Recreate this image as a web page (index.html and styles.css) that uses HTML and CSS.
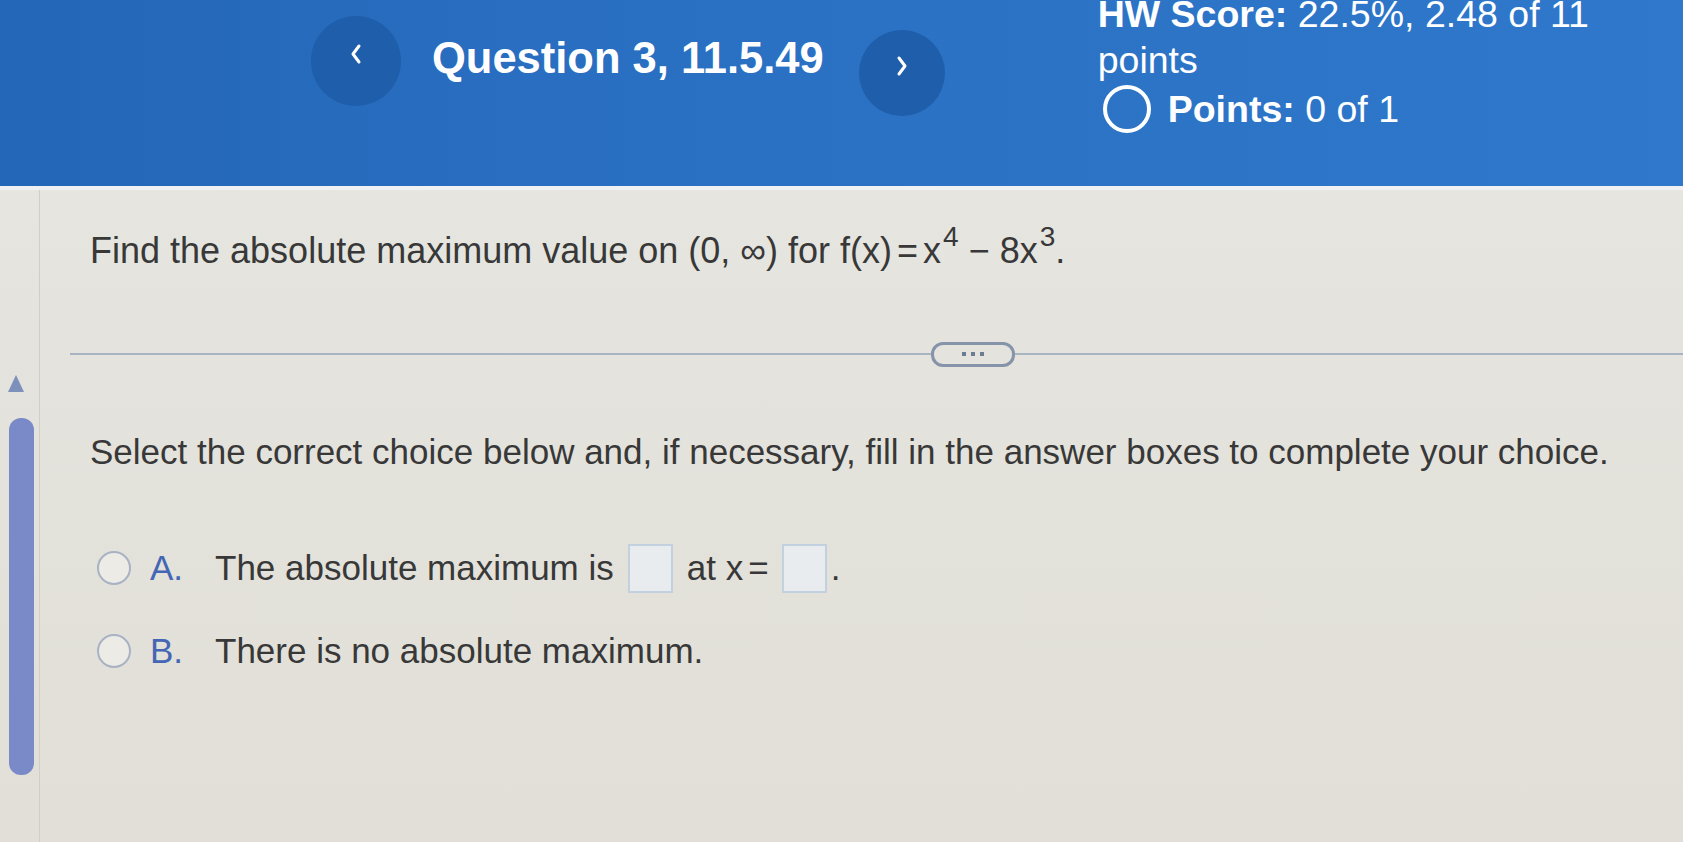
FILE: index.html
```html
<!DOCTYPE html>
<html>
<head>
<meta charset="utf-8">
<link rel="stylesheet" href="styles.css">
</head>
<body>
<div class="header">
  <div class="nav-btn prev"><svg width="14" height="22" viewBox="0 0 14 22"><path d="M10 3 L4 11 L10 19" fill="none" stroke="#fff" stroke-width="3" stroke-linecap="round" stroke-linejoin="round"/></svg></div>
  <div class="title">Question 3, 11.5.49</div>
  <div class="nav-btn next"><svg width="14" height="22" viewBox="0 0 14 22"><path d="M4 3 L10 11 L4 19" fill="none" stroke="#fff" stroke-width="3" stroke-linecap="round" stroke-linejoin="round"/></svg></div>
  <div class="score">
    <div class="score-line first"><b>HW Score:</b> 22.5%, 2.48 of 11</div>
    <div class="score-line">points</div>
    <div class="points-row"><span class="ring"></span><span><b>Points:</b> 0 of 1</span></div>
  </div>
</div>
<div class="page">
  <div class="gutter">
    <div class="tri"></div>
    <div class="bar"></div>
  </div>
  <div class="content">
    <div class="question">Find the absolute maximum value on (0, ∞) for f(x)<span class="eq">=</span>x<sup>4</sup> − 8x<sup>3</sup>.</div>
    <div class="divider"><span class="line"></span><span class="pill"><i></i><i></i><i></i></span><span class="line"></span></div>
    <div class="instr">Select the correct choice below and, if necessary, fill in the answer boxes to complete your choice.</div>
    <div class="options">
      <div class="opt"><span class="radio"></span><span class="letter">A.</span><span class="otext">The absolute maximum is</span><span class="box"></span><span class="otext">at x<span class="eq">=</span></span><span class="box second"></span><span class="otext">.</span></div>
      <div class="opt"><span class="radio"></span><span class="letter">B.</span><span class="otext">There is no absolute maximum.</span></div>
    </div>
  </div>
</div>
</body>
</html>
```
FILE: styles.css
```css
html, body {
  margin: 0;
  padding: 0;
}
body {
  width: 1683px;
  height: 842px;
  overflow: hidden;
  font-family: "Liberation Sans", Arial, sans-serif;
  background: linear-gradient(180deg, #e9e9e5 0%, #e4e3dd 40%, #e1dfd7 100%);
  color: #383838;
}
.header {
  height: 190px;
  display: flex;
  align-items: flex-start;
  padding-left: 311px;
  background: linear-gradient(90deg, #2466b8 0%, #2a70c2 40%, #2f78cb 100%);
  color: #fff;
  border-bottom: 4px solid #f0f1f2;
  box-sizing: border-box;
  overflow: hidden;
}
.nav-btn {
  border-radius: 50%;
  background: #1f5eab;
  display: flex;
  align-items: center;
  justify-content: center;
}
.nav-btn.prev {
  width: 90px;
  height: 90px;
  margin-top: 16px;
}
.nav-btn.prev svg { margin-top: -14px; }
.nav-btn.next {
  width: 86px;
  height: 86px;
  margin-top: 30px;
  margin-left: 35px;
}
.nav-btn.next svg { margin-top: -14px; }
.title {
  margin-left: 31px;
  margin-top: 37px;
  font-size: 43.5px;
  line-height: 43px;
  font-weight: bold;
  white-space: nowrap;
}
.score {
  margin-left: 153px;
  font-size: 37.5px;
  line-height: 49px;
  white-space: nowrap;
}
.score-line.first {
  line-height: 28px;
  margin-bottom: 8px;
}
.points-row {
  display: flex;
  align-items: center;
  gap: 17px;
  line-height: 48px;
  margin-left: 5px;
}
.ring {
  width: 48px;
  height: 48px;
  box-sizing: border-box;
  border: 4px solid #fff;
  border-radius: 50%;
}
.page {
  display: flex;
  height: 652px;
}
.gutter {
  width: 40px;
  border-right: 1px solid #cfcec8;
  display: flex;
  flex-direction: column;
  align-items: flex-start;
  padding-top: 185px;
  padding-left: 8px;
  box-sizing: border-box;
  flex-shrink: 0;
}
.tri {
  width: 0;
  height: 0;
  border-left: 8px solid transparent;
  border-right: 8px solid transparent;
  border-bottom: 17px solid #7d90bb;
}
.bar {
  margin-top: 26px;
  margin-left: 1px;
  width: 25px;
  height: 357px;
  border-radius: 12px;
  background: #7a89c7;
}
.content {
  flex: 1;
  padding-left: 50px;
  padding-top: 41px;
}
.question {
  font-size: 36px;
  line-height: 40px;
  white-space: nowrap;
}
.question sup {
  font-size: 0.78em;
  vertical-align: 0.6em;
  line-height: 0;
  margin-left: 2px;
}
.eq {
  margin: 0 5px;
}
.divider {
  display: flex;
  align-items: center;
  margin-top: 71px;
  margin-left: -20px;
  height: 24px;
}
.line {
  height: 2px;
  background: #a9b4c3;
  flex: 0 0 861px;
}
.line:last-child {
  flex: 1;
}
.pill {
  width: 84px;
  height: 25px;
  box-sizing: border-box;
  border: 3px solid #8594a8;
  border-radius: 12px;
  display: flex;
  align-items: center;
  justify-content: center;
  gap: 5px;
  flex-shrink: 0;
}
.pill i {
  width: 4px;
  height: 4px;
  background: #6c7c92;
}
.instr {
  margin-top: 66px;
  font-size: 35px;
  line-height: 40px;
  white-space: nowrap;
}
.options {
  margin-top: 71px;
  display: flex;
  flex-direction: column;
  gap: 33px;
}
.opt {
  display: flex;
  align-items: center;
  height: 50px;
  font-size: 35px;
  white-space: nowrap;
  margin-left: 7px;
}
.radio {
  width: 34px;
  height: 34px;
  box-sizing: border-box;
  border: 2px solid #a9b2c4;
  border-radius: 50%;
  background: #ecebe6;
  margin-right: 19px;
}
.letter {
  color: #4466b5;
  width: 65px;
}
.box {
  width: 45px;
  height: 49px;
  box-sizing: border-box;
  border: 2px solid #c3d0e0;
  background: #e9ecee;
  margin: 0 14px;
}
.box.second {
  margin: 0 4px 0 8px;
}
```
